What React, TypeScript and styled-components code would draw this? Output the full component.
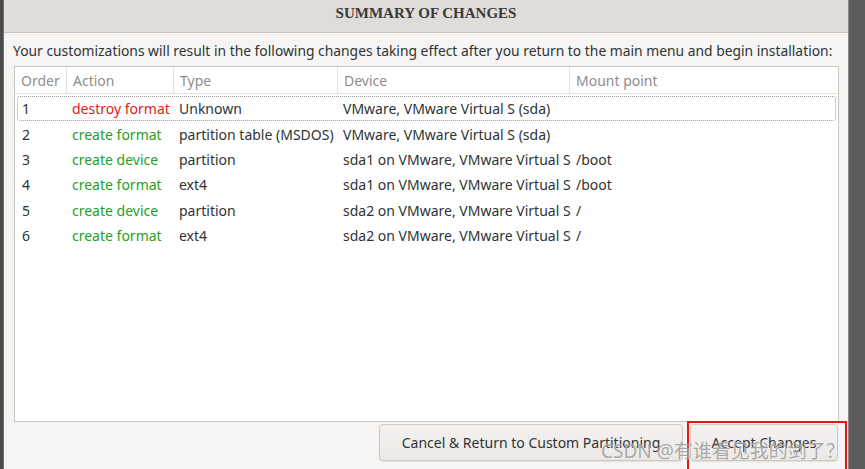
import styled, { createGlobalStyle } from 'styled-components';

const GlobalStyle = createGlobalStyle`
	html, body {
		margin: 0;
		padding: 0;
		background: #575757;
	}
	* {
		box-sizing: border-box;
	}
`;

const Screen = styled.div`
	width: 865px;
	height: 469px;
	display: flex;
	overflow: hidden;
	background: linear-gradient(90deg, #4f4f4f 0%, #5c5c5c 100%);
	font-family: 'Noto Sans', 'DejaVu Sans', sans-serif;
	position: relative;
`;

const LeftEdge = styled.div`
	width: 4px;
	background: #4a4a4a;
	border-right: 1px solid #6e6e6e;
`;

const Dialog = styled.div`
	width: 845px;
	display: flex;
	flex-direction: column;
	background: #f6f5f4;
	border-right: 1px solid #8a8a8a;
`;

const TitleBar = styled.div`
	height: 33px;
	display: flex;
	align-items: center;
	justify-content: center;
	background: #dfdcd9;
	border-bottom: 1px solid #c8c4c0;
	font-family: 'Liberation Serif', 'DejaVu Serif', serif;
	font-weight: bold;
	font-size: 15px;
	color: #3a3a3a;
	padding-bottom: 6px;
`;

const Body = styled.div`
	flex: 1;
	display: flex;
	flex-direction: column;
	padding: 8px 9px 7px 9px;
`;

const Intro = styled.div`
	font-size: 13.85px;
	color: #2e3436;
	line-height: 20px;
	margin-bottom: 5px;
	white-space: nowrap;
`;

const TableFrame = styled.div`
	height: 356px;
	margin-left: 1px;
	width: 825px;
	background: #ffffff;
	border: 1px solid #cdc7c2;
	display: flex;
	flex-direction: column;
`;

const Grid = styled.div`
	display: grid;
	grid-template-columns: 52px 107px 164px 232px 1fr;
`;

const HeaderCell = styled.div`
	height: 27px;
	display: flex;
	align-items: center;
	padding-left: 6px;
	font-size: 14px;
	color: #8e8e8e;
	border-right: 1px solid #e3e0dd;
	border-bottom: 1px solid #e3e0dd;
	&:last-child {
		border-right: none;
	}
`;

const Rows = styled.div`
	padding: 2px 2px 0 2px;
`;

const Row = styled.div<{ $focused?: boolean }>`
	display: grid;
	grid-template-columns: 50px 107px 164px 233px 1fr;
	height: 25.4px;
	align-items: center;
	border: 1px ${(p) => (p.$focused ? 'dotted #9a9a9a' : 'solid transparent')};
	border-radius: 3px;
	font-size: 14px;
	color: #2e3436;
`;

const Cell = styled.div<{ $tone?: 'destroy' | 'create' }>`
	padding-left: 4px;
	white-space: nowrap;
	overflow: hidden;
	color: ${(p) =>
		p.$tone === 'destroy' ? '#e01b1b' : p.$tone === 'create' ? '#26a026' : '#2e3436'};
`;

const Footer = styled.div`
	display: flex;
	justify-content: flex-end;
	gap: 7px;
	padding-top: 2px;
	padding-right: 1px;
`;

const Button = styled.button<{ $width: number }>`
	width: ${(p) => p.$width}px;
	height: 37px;
	border: 1px solid #cdc7c2;
	border-radius: 4px;
	background: linear-gradient(#f4f2f1, #ebe8e6);
	font-family: 'Noto Sans', 'DejaVu Sans', sans-serif;
	font-size: 14px;
	color: #2e3436;
	box-shadow: 0 1px 1px rgba(0, 0, 0, 0.08);
`;

const Highlight = styled.div`
	position: absolute;
	left: 687px;
	top: 421px;
	width: 160px;
	height: 52px;
	border: 2px solid #e01818;
	pointer-events: none;
`;

const Watermark = styled.div`
	position: absolute;
	left: 601px;
	top: 436px;
	font-family: 'Noto Sans', 'Noto Sans CJK SC', sans-serif;
	font-size: 19px;
	color: rgba(110, 110, 110, 0.6);
	text-shadow: 0 0 1px rgba(255, 255, 255, 0.9);
	white-space: nowrap;
	pointer-events: none;
`;

type Change = {
	order: number;
	action: string;
	type: string;
	device: string;
	mount: string;
};

const changes: Change[] = [
	{ order: 1, action: 'destroy format', type: 'Unknown', device: 'VMware, VMware Virtual S (sda)', mount: '' },
	{ order: 2, action: 'create format', type: 'partition table (MSDOS)', device: 'VMware, VMware Virtual S (sda)', mount: '' },
	{ order: 3, action: 'create device', type: 'partition', device: 'sda1 on VMware, VMware Virtual S', mount: '/boot' },
	{ order: 4, action: 'create format', type: 'ext4', device: 'sda1 on VMware, VMware Virtual S', mount: '/boot' },
	{ order: 5, action: 'create device', type: 'partition', device: 'sda2 on VMware, VMware Virtual S', mount: '/' },
	{ order: 6, action: 'create format', type: 'ext4', device: 'sda2 on VMware, VMware Virtual S', mount: '/' },
];

const headers = ['Order', 'Action', 'Type', 'Device', 'Mount point'];

export default function App() {
	return (
		<>
			<GlobalStyle />
			<Screen>
				<LeftEdge />
				<Dialog>
					<TitleBar>SUMMARY OF CHANGES</TitleBar>
					<Body>
						<Intro>
							Your customizations will result in the following changes taking effect after you
							return to the main menu and begin installation:
						</Intro>
						<TableFrame>
							<Grid>
								{headers.map((h) => (
									<HeaderCell key={h}>{h}</HeaderCell>
								))}
							</Grid>
							<Rows>
								{changes.map((c) => (
									<Row key={c.order} $focused={c.order === 1}>
										<Cell>{c.order}</Cell>
										<Cell $tone={c.action.startsWith('destroy') ? 'destroy' : 'create'}>
											{c.action}
										</Cell>
										<Cell>{c.type}</Cell>
										<Cell>{c.device}</Cell>
										<Cell>{c.mount}</Cell>
									</Row>
								))}
							</Rows>
						</TableFrame>
						<Footer>
							<Button $width={304}>Cancel &amp; Return to Custom Partitioning</Button>
							<Button $width={148}>Accept Changes</Button>
						</Footer>
					</Body>
				</Dialog>
				<Highlight />
				<Watermark>CSDN @有谁看见我的剑了？</Watermark>
			</Screen>
		</>
	);
}
